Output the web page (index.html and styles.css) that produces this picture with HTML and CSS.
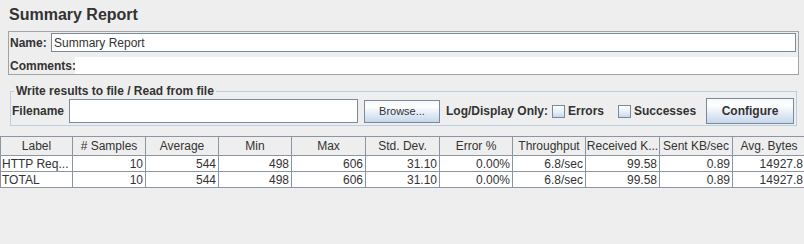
FILE: index.html
```html
<!DOCTYPE html>
<html lang="en">
<head>
    <title>Summary Report</title>
    <link rel="stylesheet" href="styles.css">
</head>
<body>

<h1 class="title">Summary Report</h1>

<div class="name-box">
    <div class="name-row">
        <label for="name">Name:</label>
        <input type="text" id="name" value="Summary Report">
    </div>
    <div class="comments-row">
        <label>Comments:</label>
        <div class="comments-field"></div>
    </div>
</div>

<fieldset class="file-group">
    <legend>Write results to file / Read from file</legend>
    <div class="file-row">
        <label for="filename" class="file-label">Filename</label>
        <input type="text" id="filename" class="file-input">
        <button class="btn browse">Browse...</button>
        <span class="log-label">Log/Display Only:</span>
        <span class="box"></span>
        <span class="check-text errors">Errors</span>
        <span class="box"></span>
        <span class="check-text successes">Successes</span>
        <button class="btn configure">Configure</button>
    </div>
</fieldset>

<table class="results">
    <colgroup>
        <col style="width: 72px">
        <col style="width: 73px">
        <col style="width: 73px">
        <col style="width: 73px">
        <col style="width: 74px">
        <col style="width: 74px">
        <col style="width: 73px">
        <col style="width: 73px">
        <col style="width: 74px">
        <col style="width: 73px">
        <col style="width: 73px">
    </colgroup>
    <thead>
        <tr>
            <th>Label</th>
            <th># Samples</th>
            <th>Average</th>
            <th>Min</th>
            <th>Max</th>
            <th>Std. Dev.</th>
            <th>Error %</th>
            <th>Throughput</th>
            <th>Received K...</th>
            <th>Sent KB/sec</th>
            <th>Avg. Bytes</th>
        </tr>
    </thead>
    <tbody>
        <tr>
            <td class="label">HTTP Req...</td>
            <td>10</td>
            <td>544</td>
            <td>498</td>
            <td>606</td>
            <td>31.10</td>
            <td>0.00%</td>
            <td>6.8/sec</td>
            <td>99.58</td>
            <td>0.89</td>
            <td>14927.8</td>
        </tr>
        <tr>
            <td class="label">TOTAL</td>
            <td>10</td>
            <td>544</td>
            <td>498</td>
            <td>606</td>
            <td>31.10</td>
            <td>0.00%</td>
            <td>6.8/sec</td>
            <td>99.58</td>
            <td>0.89</td>
            <td>14927.8</td>
        </tr>
    </tbody>
</table>

</body>
</html>
```

FILE: styles.css
```css
body {
    margin: 0;
    width: 804px;
    overflow: hidden;
    background-color: #eeeeee;
    font-family: "Liberation Sans", Arial, sans-serif;
    font-size: 12px;
    color: #333333;
}
.title {
    margin: 0 0 6px 0;
    padding: 5px 0 0 9px;
    font-size: 16px;
    line-height: 20px;
    font-weight: bold;
}
.name-box {
    margin-left: 8px;
    width: 789px;
    border: 1px solid #a3a3a3;
}
.name-row {
    display: flex;
    align-items: center;
    padding: 1px 0 0 1px;
}
.name-row label {
    width: 41px;
    font-weight: bold;
}
.name-row input {
    width: 745px;
    height: 19px;
    box-sizing: border-box;
    margin: 0;
    padding: 0 2px;
    border: 1px solid #7a8a99;
    font: 12px "Liberation Sans", Arial, sans-serif;
    color: #333333;
    background: white;
}
.comments-row {
    display: flex;
    align-items: center;
    height: 17px;
    margin-top: 5px;
    padding-left: 1px;
}
.comments-row label {
    width: 65px;
    font-weight: bold;
}
.comments-field {
    flex: 1;
    align-self: stretch;
    background-color: white;
}
.file-group {
    box-sizing: border-box;
    width: 787px;
    margin: 9px 0 0 10px;
    padding: 0 2px 1px 1px;
    border: 1px solid #b8cfe5;
}
.file-group legend {
    margin-left: 2px;
    padding: 0 2px;
    line-height: 14px;
    font-weight: bold;
}
.file-row {
    display: flex;
    align-items: center;
    height: 26px;
}
.file-label {
    width: 57px;
    font-weight: bold;
}
.file-input {
    width: 289px;
    height: 24px;
    box-sizing: border-box;
    margin: 0;
    border: 1px solid #7a8a99;
    background: white;
}
.btn {
    box-sizing: border-box;
    margin: 0;
    padding: 0;
    border: 1px solid #7a8a99;
    background: linear-gradient(to bottom, #f4f8fc 0%, #ffffff 25%, #e3ecf6 60%, #c6d8eb 100%);
    font-family: "Liberation Sans", Arial, sans-serif;
    color: #333333;
}
.browse {
    width: 76px;
    height: 23px;
    margin-left: 6px;
    font-size: 11px;
}
.log-label {
    width: 106px;
    margin-left: 6px;
    font-weight: bold;
}
.box {
    width: 13px;
    height: 13px;
    box-sizing: border-box;
    border: 1px solid #7a8a99;
    background: linear-gradient(to bottom, #ffffff 0%, #e3ecf6 60%, #c6d8eb 100%);
}
.check-text {
    margin-left: 3px;
    font-weight: bold;
}
.errors {
    width: 50px;
}
.successes {
    width: 72px;
}
.configure {
    width: 88px;
    height: 26px;
    font-size: 12px;
    font-weight: bold;
}
.results {
    margin-top: 10px;
    width: 805px;
    table-layout: fixed;
    border-collapse: collapse;
}
.results th {
    height: 18px;
    padding: 0;
    border: 1px solid #8a96a3;
    background-color: #eeeeee;
    font-weight: normal;
    text-align: center;
    white-space: nowrap;
    overflow: hidden;
}
.results td {
    height: 15px;
    padding: 0 2px 0 1px;
    border: 1px solid #8a96a3;
    background-color: white;
    text-align: right;
    line-height: 14px;
    white-space: nowrap;
    overflow: hidden;
}
.results td.label {
    text-align: left;
}
```
